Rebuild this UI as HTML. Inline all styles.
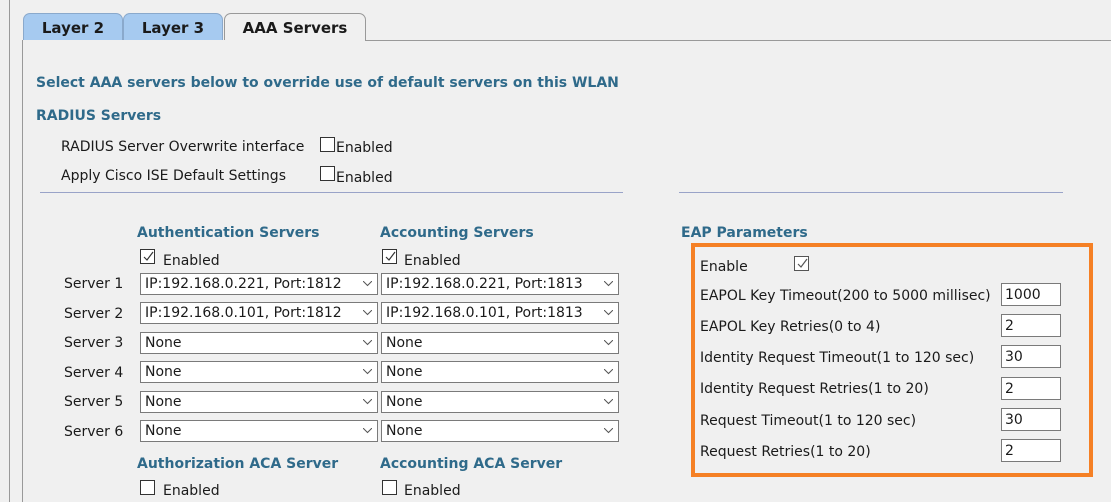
<!DOCTYPE html><html><head><meta charset="utf-8"><style>
body{margin:0;width:1111px;height:502px;background:#f0f0f0;font-family:"DejaVu Sans",Verdana,sans-serif;font-size:14px;color:#1a1a1a;position:relative;overflow:hidden}
.a{position:absolute;white-space:nowrap;line-height:19px}
.h{color:#2f6a8a;font-weight:bold;font-size:14px}
.tab{position:absolute;top:13px;height:27px;border:1px solid #8aa9cc;border-bottom:none;border-radius:7px 7px 0 0;background:#a6caf0;font-weight:bold;font-size:15px;text-align:center;line-height:28px;box-sizing:border-box}
.sel{position:absolute;height:22px;border:1px solid #7a7a7a;background:#fff;box-sizing:border-box;padding-left:4px;line-height:21px;font-size:14px;white-space:nowrap}
.sel svg{position:absolute;right:5px;top:7px}
.inp{position:absolute;left:1001px;width:60px;height:23px;border:1px solid #7a7a7a;background:#fff;box-sizing:border-box;padding-left:3px;line-height:22px}
.cb{position:absolute;width:15px;height:15px;border:1px solid #333;background:#fff;box-sizing:border-box}
.cb svg{position:absolute;left:1px;top:1px}
</style></head><body>
<div class="a" style="left:9px;top:0;width:1px;height:502px;background:#999"></div>
<div class="a" style="left:22px;top:40px;width:1px;height:462px;background:#999"></div>
<div class="a" style="left:365px;top:40px;width:746px;height:1px;background:#999"></div>
<div class="tab" style="left:23px;width:100px">Layer 2</div>
<div class="tab" style="left:123px;width:100px">Layer 3</div>
<div class="tab" style="left:224px;width:142px;background:#f0f0f0;border-color:#999">AAA Servers</div>

<div class="a h" style="left:36px;top:74px">Select AAA servers below to override use of default servers on this WLAN</div>
<div class="a h" style="left:36px;top:107px">RADIUS Servers</div>
<div class="a" style="left:61px;top:138px">RADIUS Server Overwrite interface</div>
<div class="cb" style="left:320px;top:137px"></div><div class="a" style="left:336px;top:139px">Enabled</div>
<div class="a" style="left:61px;top:167px">Apply Cisco ISE Default Settings</div>
<div class="cb" style="left:320px;top:166px"></div><div class="a" style="left:336px;top:169px">Enabled</div>
<div class="a" style="left:40px;top:192px;width:583px;height:1px;background:#99a3c8"></div>
<div class="a" style="left:679px;top:192px;width:384px;height:1px;background:#99a3c8"></div>

<div class="a h" style="left:137px;top:224px">Authentication Servers</div>
<div class="a h" style="left:380px;top:224px">Accounting Servers</div>
<div class="cb" style="left:140px;top:249px"><svg width="12" height="12"><path d="M2 6l3 3 6-8" stroke="#333" fill="none" stroke-width="1.2"/></svg></div><div class="a" style="left:163px;top:252px">Enabled</div>
<div class="cb" style="left:382px;top:249px"><svg width="12" height="12"><path d="M2 6l3 3 6-8" stroke="#333" fill="none" stroke-width="1.2"/></svg></div><div class="a" style="left:404px;top:252px">Enabled</div>

<div class="a" style="left:64px;top:275px">Server 1</div>
<div class="sel" style="left:140px;top:273px;width:238px">IP:192.168.0.221, Port:1812<svg width="9" height="6"><path d="M0 0l4.5 4.5L9 0" stroke="#555" fill="none"/></svg></div>
<div class="sel" style="left:381px;top:273px;width:238px">IP:192.168.0.221, Port:1813<svg width="9" height="6"><path d="M0 0l4.5 4.5L9 0" stroke="#555" fill="none"/></svg></div>
<div class="a" style="left:64px;top:305px">Server 2</div>
<div class="sel" style="left:140px;top:302px;width:238px">IP:192.168.0.101, Port:1812<svg width="9" height="6"><path d="M0 0l4.5 4.5L9 0" stroke="#555" fill="none"/></svg></div>
<div class="sel" style="left:381px;top:302px;width:238px">IP:192.168.0.101, Port:1813<svg width="9" height="6"><path d="M0 0l4.5 4.5L9 0" stroke="#555" fill="none"/></svg></div>
<div class="a" style="left:64px;top:334px">Server 3</div>
<div class="sel" style="left:140px;top:332px;width:238px">None<svg width="9" height="6"><path d="M0 0l4.5 4.5L9 0" stroke="#555" fill="none"/></svg></div>
<div class="sel" style="left:381px;top:332px;width:238px">None<svg width="9" height="6"><path d="M0 0l4.5 4.5L9 0" stroke="#555" fill="none"/></svg></div>
<div class="a" style="left:64px;top:364px">Server 4</div>
<div class="sel" style="left:140px;top:361px;width:238px">None<svg width="9" height="6"><path d="M0 0l4.5 4.5L9 0" stroke="#555" fill="none"/></svg></div>
<div class="sel" style="left:381px;top:361px;width:238px">None<svg width="9" height="6"><path d="M0 0l4.5 4.5L9 0" stroke="#555" fill="none"/></svg></div>
<div class="a" style="left:64px;top:393px">Server 5</div>
<div class="sel" style="left:140px;top:391px;width:238px">None<svg width="9" height="6"><path d="M0 0l4.5 4.5L9 0" stroke="#555" fill="none"/></svg></div>
<div class="sel" style="left:381px;top:391px;width:238px">None<svg width="9" height="6"><path d="M0 0l4.5 4.5L9 0" stroke="#555" fill="none"/></svg></div>
<div class="a" style="left:64px;top:423px">Server 6</div>
<div class="sel" style="left:140px;top:420px;width:238px">None<svg width="9" height="6"><path d="M0 0l4.5 4.5L9 0" stroke="#555" fill="none"/></svg></div>
<div class="sel" style="left:381px;top:420px;width:238px">None<svg width="9" height="6"><path d="M0 0l4.5 4.5L9 0" stroke="#555" fill="none"/></svg></div>

<div class="a h" style="left:137px;top:455px">Authorization ACA Server</div>
<div class="a h" style="left:380px;top:455px">Accounting ACA Server</div>
<div class="cb" style="left:140px;top:480px"></div><div class="a" style="left:163px;top:482px">Enabled</div>
<div class="cb" style="left:382px;top:480px"></div><div class="a" style="left:404px;top:482px">Enabled</div>

<div class="a h" style="left:681px;top:224px">EAP Parameters</div>
<div class="a" style="left:691px;top:243px;width:402px;height:234px;border:4px solid #f58025;box-sizing:border-box"></div>
<div class="a" style="left:700px;top:258px">Enable</div>
<div class="cb" style="left:794px;top:256px;border-color:#555"><svg width="12" height="12"><path d="M2 6l3 3 6-8" stroke="#555" fill="none" stroke-width="1.2"/></svg></div>
<div class="a" style="left:700px;top:287px">EAPOL Key Timeout(200 to 5000 millisec)</div><div class="inp" style="top:283px">1000</div>
<div class="a" style="left:700px;top:318px">EAPOL Key Retries(0 to 4)</div><div class="inp" style="top:314px">2</div>
<div class="a" style="left:700px;top:349px">Identity Request Timeout(1 to 120 sec)</div><div class="inp" style="top:345px">30</div>
<div class="a" style="left:700px;top:380px">Identity Request Retries(1 to 20)</div><div class="inp" style="top:377px">2</div>
<div class="a" style="left:700px;top:412px">Request Timeout(1 to 120 sec)</div><div class="inp" style="top:408px">30</div>
<div class="a" style="left:700px;top:443px">Request Retries(1 to 20)</div><div class="inp" style="top:439px">2</div>
</body></html>
